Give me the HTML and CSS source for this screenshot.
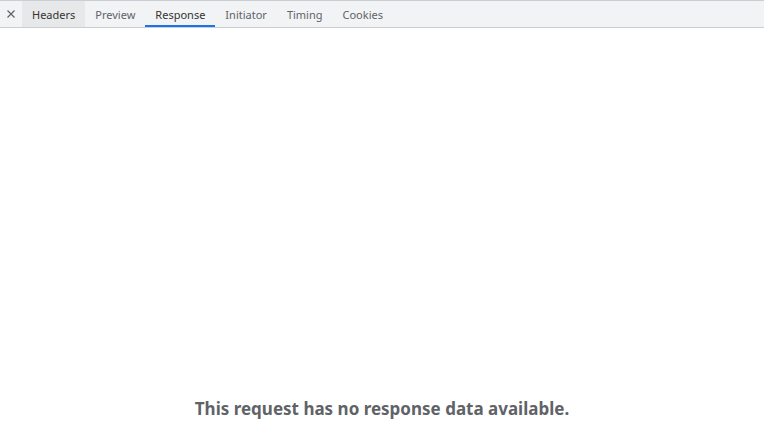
FILE: index.html
```html
<!DOCTYPE html>
<html>
<head>
<meta charset="utf-8">
<link rel="stylesheet" href="styles.css">
</head>
<body>
<div class="tabbar">
  <div class="close">
    <svg width="8" height="8" viewBox="0 0 8 8"><path d="M0.5 0.5L7.5 7.5M7.5 0.5L0.5 7.5" stroke="#5f6368" stroke-width="1.2"/></svg>
  </div>
  <div class="tab hover">Headers</div>
  <div class="tab">Preview</div>
  <div class="tab selected">Response</div>
  <div class="tab">Initiator</div>
  <div class="tab">Timing</div>
  <div class="tab">Cookies</div>
</div>
<div class="content">
  <div class="empty">This request has no response data available.</div>
</div>
</body>
</html>
```
FILE: styles.css
```css
html, body {
  margin: 0;
  padding: 0;
  height: 100%;
  background: #fff;
  font-family: "Noto Sans", "Open Sans", sans-serif;
}
body {
  display: flex;
  flex-direction: column;
}
.tabbar {
  display: flex;
  align-items: stretch;
  height: 26px;
  background: #f1f3f4;
  border-top: 1px solid #cacdd1;
  border-bottom: 1px solid #cacdd1;
}
.close {
  width: 22px;
  display: flex;
  align-items: center;
  justify-content: center;
}
.tab {
  padding: 0 10px;
  font-size: 11px;
  color: #5f6368;
  display: flex;
  align-items: center;
  box-sizing: border-box;
  border-bottom: 2px solid transparent;
  border-top: 2px solid transparent;
}
.tab.hover {
  background: #e6e8ea;
  color: #333;
}
.tab.selected {
  color: #333;
  border-bottom-color: #1a73e8;
}
.content {
  flex: 1;
  display: flex;
  align-items: flex-end;
  justify-content: center;
  padding-bottom: 9px;
}
.empty {
  font-size: 17px;
  font-weight: bold;
  color: #5f6368;
  line-height: 22px;
}
```
